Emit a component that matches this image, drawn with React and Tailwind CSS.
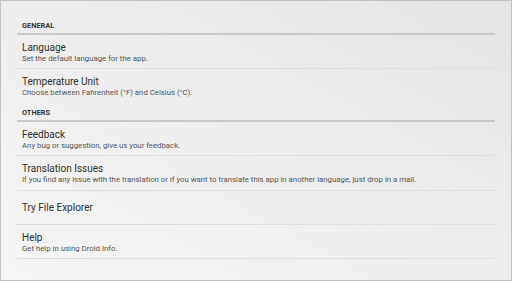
import React from "react";

const Header = ({ children }) => (
  <div className="h-[17px] flex items-end pb-[3px] px-[5px]">
    <span className="text-[7.4px] leading-[9px] font-bold uppercase text-[#353535]">{children}</span>
  </div>
);

const SectionDivider = () => <div className="h-[2px] bg-[#c9c9c9]" />;
const RowDivider = () => <div className="h-px bg-[#dedede]" />;

const Row = ({ title, sub }) => (
  <div className={"h-[33.4px] px-[5px] flex flex-col " + (sub ? "pt-[6px]" : "justify-center")}>
    <div className="text-[10px] leading-[13px] text-[#2e2e2e]">{title}</div>
    {sub && <div className="text-[7.8px] leading-[9px] text-[#555]">{sub}</div>}
  </div>
);

export default function App() {
  return (
    <div
      className="w-[512px] h-[281px] border border-[#c2c2c2] bg-linear-to-tr from-[#f6f6f6] to-[#e4e4e4] px-4 pt-[15px]"
      style={{ fontFamily: "Roboto, 'Liberation Sans', sans-serif" }}
    >
      <Header>General</Header>
      <SectionDivider />
      <Row title="Language" sub="Set the default language for the app." />
      <RowDivider />
      <Row title="Temperature Unit" sub="Choose between Fahrenheit (°F) and Celsius (°C)." />
      <Header>Others</Header>
      <SectionDivider />
      <Row title="Feedback" sub="Any bug or suggestion, give us your feedback." />
      <RowDivider />
      <Row
        title="Translation Issues"
        sub="If you find any issue with the translation or if you want to translate this app in another language, just drop in a mail."
      />
      <RowDivider />
      <Row title="Try File Explorer" />
      <RowDivider />
      <Row title="Help" sub="Get help in using Droid Info." />
      <RowDivider />
    </div>
  );
}
